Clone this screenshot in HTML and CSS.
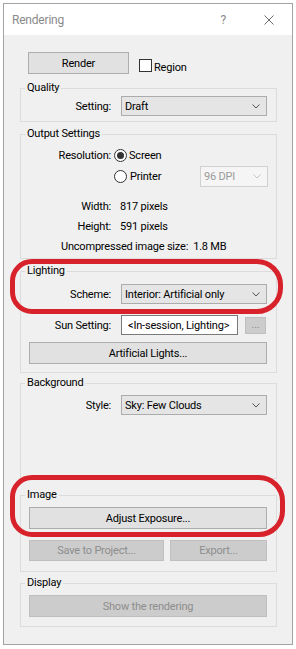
FILE: index.html
```html
<!DOCTYPE html>
<html lang="en">
<head>
    <meta charset="UTF-8">
    <meta name="viewport" content="width=device-width, initial-scale=1.0">
    <title>Rendering</title>
    <link rel="stylesheet" href="styles.css">
</head>
<body>
    <div class="window">
        <div class="titlebar">
            <span class="title">Rendering</span>
            <span class="help">?</span>
            <svg class="close" width="10" height="10" viewBox="0 0 10 10">
                <path d="M0.5 0.5 L9.5 9.5 M9.5 0.5 L0.5 9.5" stroke="#6b6b6b" stroke-width="1" fill="none"/>
            </svg>
        </div>

        <div class="content">
            <div class="top-row">
                <button class="btn render">Render</button>
                <label class="check"><span class="box"></span>Region</label>
            </div>

            <fieldset class="group quality">
                <legend>Quality</legend>
                <div class="row">
                    <span class="lbl">Setting:</span>
                    <div class="combo">Draft
                        <svg class="chev" width="8" height="5" viewBox="0 0 8 5"><path d="M0.5 0.5 L4 4 L7.5 0.5" stroke="#555" fill="none"/></svg>
                    </div>
                </div>
            </fieldset>

            <fieldset class="group output">
                <legend>Output Settings</legend>
                <div class="row tall">
                    <span class="lbl">Resolution:</span>
                    <span class="radio checked"></span><span class="radio-text">Screen</span>
                </div>
                <div class="row tall">
                    <span class="lbl"></span>
                    <span class="radio"></span><span class="radio-text printer">Printer</span>
                    <div class="combo dpi">96 DPI
                        <svg class="chev" width="8" height="5" viewBox="0 0 8 5"><path d="M0.5 0.5 L4 4 L7.5 0.5" stroke="#c4c4c4" fill="none"/></svg>
                    </div>
                </div>
                <div class="row info first">
                    <span class="lbl">Width:</span>
                    <span class="val">817 pixels</span>
                </div>
                <div class="row info">
                    <span class="lbl">Height:</span>
                    <span class="val">591 pixels</span>
                </div>
                <div class="row info size">Uncompressed image size:&nbsp; 1.8 MB</div>
            </fieldset>

            <fieldset class="group lighting">
                <legend>Lighting</legend>
                <div class="row">
                    <span class="lbl">Scheme:</span>
                    <div class="combo">Interior: Artificial only
                        <svg class="chev" width="8" height="5" viewBox="0 0 8 5"><path d="M0.5 0.5 L4 4 L7.5 0.5" stroke="#555" fill="none"/></svg>
                    </div>
                </div>
                <div class="row sun">
                    <span class="lbl">Sun Setting:</span>
                    <div class="textbox">&lt;In-session, Lighting&gt;</div>
                    <button class="btn dots" disabled>...</button>
                </div>
                <button class="btn wide lights">Artificial Lights...</button>
            </fieldset>

            <fieldset class="group background">
                <legend>Background</legend>
                <div class="row">
                    <span class="lbl">Style:</span>
                    <div class="combo">Sky: Few Clouds
                        <svg class="chev" width="8" height="5" viewBox="0 0 8 5"><path d="M0.5 0.5 L4 4 L7.5 0.5" stroke="#555" fill="none"/></svg>
                    </div>
                </div>
            </fieldset>

            <fieldset class="group image">
                <legend>Image</legend>
                <button class="btn wide">Adjust Exposure...</button>
                <div class="btn-pair">
                    <button class="btn save" disabled>Save to Project...</button>
                    <button class="btn export" disabled>Export...</button>
                </div>
            </fieldset>

            <fieldset class="group display">
                <legend>Display</legend>
                <button class="btn wide" disabled>Show the rendering</button>
            </fieldset>
        </div>

        <!-- red hand-drawn marks over the dialog -->
        <div class="mark mark-lighting"></div>
        <div class="mark mark-image"></div>
    </div>
</body>
</html>
```

FILE: styles.css
```css
body {
    margin: 0;
    background-color: #ffffff;
    font-family: 'Segoe UI', 'Roboto', sans-serif;
    font-size: 11px;
    letter-spacing: -0.2px;
    color: #000000;
}

.window {
    position: relative;
    box-sizing: border-box;
    width: 290px;
    height: 642px;
    margin: 3px 0 0 3px;
    border: 1px solid #a3a3a3;
    background-color: #f0f0f0;
}

.titlebar {
    height: 31px;
    background-color: #ffffff;
    display: flex;
    align-items: center;
    padding-left: 8px;
}

.title {
    color: #8a8a8a;
    font-size: 12px;
    flex: 1;
}

.help {
    color: #8a8a8a;
    font-size: 12px;
    margin-right: 38px;
}

.close {
    margin-right: 18px;
}

.content {
    padding: 17px 15px 0 16px;
}

.top-row {
    display: flex;
    height: 22px;
}

.btn {
    box-sizing: border-box;
    font-family: inherit;
    font-size: 11px;
    letter-spacing: -0.2px;
    color: #000000;
    background-color: #e1e1e1;
    border: 1px solid #adadad;
    padding: 0;
    height: 22px;
}

.btn:disabled {
    background-color: #cccccc;
    border-color: #bfbfbf;
    color: #8c8c8c;
}

.render {
    width: 101px;
    margin-left: 8px;
}

.check {
    display: flex;
    align-items: flex-end;
    margin-left: 10px;
}

.box {
    box-sizing: border-box;
    width: 13px;
    height: 13px;
    border: 1px solid #333333;
    background-color: #ffffff;
    margin-right: 2px;
    margin-bottom: 2px;
}

.group {
    margin: 0;
    padding: 0 9px 0 8px;
    border: 1px solid #dcdcdc;
    min-inline-size: 0;
}

.group legend {
    padding: 0 2px;
    margin-left: -4px;
    line-height: 14px;
}

.row {
    display: flex;
    align-items: center;
    height: 20px;
}

.lbl {
    width: 82px;
    text-align: right;
    margin-right: 10px;
    flex-shrink: 0;
}

.combo {
    box-sizing: border-box;
    width: 146px;
    height: 20px;
    background-color: #e5e5e5;
    border: 1px solid #acacac;
    display: flex;
    align-items: center;
    justify-content: space-between;
    padding: 0 6px 0 3px;
}

.quality {
    margin-top: 7px;
    padding-top: 1px;
    padding-bottom: 5px;
}

.output {
    margin-top: 5px;
    padding-top: 4px;
    padding-bottom: 2px;
}

.row.tall {
    height: 21px;
}

.output .lbl {
    margin-right: 3px;
}

.radio {
    box-sizing: border-box;
    width: 13px;
    height: 13px;
    border: 1px solid #333333;
    border-radius: 50%;
    background-color: #ffffff;
    display: flex;
    align-items: center;
    justify-content: center;
    flex-shrink: 0;
}

.radio.checked::after {
    content: '';
    width: 7px;
    height: 7px;
    border-radius: 50%;
    background-color: #333333;
}

.radio-text {
    margin-left: 2px;
}

.radio-text.printer {
    margin-left: 3px;
}

.combo.dpi {
    width: 68px;
    height: 21px;
    margin-left: auto;
    margin-right: -1px;
    background-color: #f5f5f5;
    border-color: #d0d0d0;
    color: #9a9a9a;
}

.row.info.first {
    margin-top: 9px;
}

.output .info .lbl {
    margin-right: 9px;
}

.row.size {
    padding-left: 32px;
}

.lighting {
    margin-top: 5px;
    padding-top: 6px;
    padding-bottom: 8px;
}

.row.sun {
    margin-top: 11px;
}

.textbox {
    box-sizing: border-box;
    width: 117px;
    height: 20px;
    background-color: #ffffff;
    border: 1px solid #7a7a7a;
    display: flex;
    align-items: center;
    padding-left: 6px;
    white-space: nowrap;
    overflow: hidden;
}

.btn.dots {
    width: 21px;
    height: 17px;
    margin-left: 7px;
    line-height: 10px;
}

.btn.wide {
    display: block;
    width: 100%;
}

.lights {
    margin-top: 7px;
}

.background {
    margin-top: 3px;
    padding-top: 5px;
    padding-bottom: 63px;
}

.image {
    margin-top: 9px;
    padding-top: 5px;
    padding-bottom: 10px;
}

.btn-pair {
    display: flex;
    gap: 6px;
    margin-top: 11px;
}

.btn.save {
    width: 135px;
    height: 21px;
}

.btn.export {
    flex: 1;
    height: 21px;
}

.display {
    margin-top: 4px;
    padding-top: 5px;
    padding-bottom: 9px;
}

.mark {
    position: absolute;
    box-sizing: border-box;
    border: 5px solid #d8222b;
    border-radius: 22px 26px 26px 22px;
}

.mark-lighting {
    left: 6px;
    top: 255px;
    width: 273px;
    height: 55px;
}

.mark-image {
    left: 6px;
    top: 471px;
    width: 275px;
    height: 62px;
}
```
